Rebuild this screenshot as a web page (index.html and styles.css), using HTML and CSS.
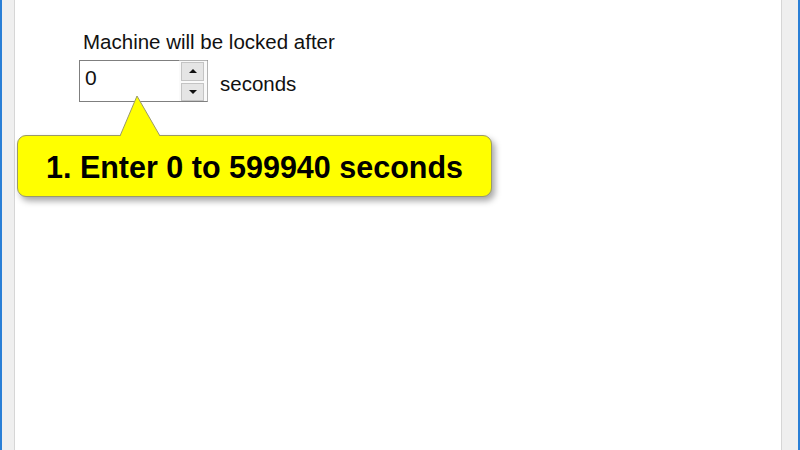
FILE: index.html
```html
<!DOCTYPE html>
<html>
<head>
<meta charset="utf-8">
<link rel="stylesheet" href="styles.css">
</head>
<body>
<div class="window">
  <div class="edge edge-left"></div>
  <div class="panel">
    <div class="label">Machine will be locked after</div>
    <div class="row">
      <div class="spin">
        <div class="field">0</div>
        <div class="buttons">
          <div class="btn"><span class="arrow up"></span></div>
          <div class="btn"><span class="arrow down"></span></div>
        </div>
      </div>
      <span class="unit">seconds</span>
    </div>
    <div class="callout">
      <svg class="pointer" width="46" height="42" viewBox="0 0 46 42">
        <polygon points="3,41 20,1 43,41" fill="#ffff00"/>
        <polyline points="3,41 20,1 43,41" fill="none" stroke="#9a9a6a" stroke-width="1"/>
      </svg>
      <div class="bubble">1. Enter 0 to 599940 seconds</div>
    </div>
  </div>
  <div class="edge edge-right"></div>
</div>
</body>
</html>
```
FILE: styles.css
```css
html, body {
  margin: 0;
  padding: 0;
  width: 800px;
  height: 450px;
  overflow: hidden;
  background: #ffffff;
  font-family: "Liberation Sans", Arial, sans-serif;
}

.window {
  display: flex;
  width: 800px;
  height: 450px;
}

.edge {
  background: #efefef;
  flex: none;
}

.edge-left {
  width: 12px;
  border-left: 2px solid #2a7fd6;
}

.edge-right {
  width: 16px;
  border-right: 2px solid #2a7fd6;
}

.panel {
  position: relative;
  flex: 1;
  background: #ffffff;
  border-left: 1px solid #d6d6d6;
  border-right: 1px solid #d6d6d6;
  padding: 30px 0 0 64px;
}

.label {
  margin-left: 4px;
  font-size: 20.5px;
  line-height: 23px;
  color: #111111;
}

.row {
  display: flex;
  align-items: center;
  margin-top: 7px;
}

.spin {
  display: flex;
  width: 129px;
  height: 42px;
  box-sizing: border-box;
  border: 1px solid #7f7f7f;
  border-right-color: #b4b4b4;
  background: #ffffff;
}

.field {
  width: 94px;
  padding: 5px 0 0 5px;
  font-size: 21px;
  line-height: 24px;
  color: #111111;
}

.buttons {
  flex: 1;
  display: flex;
  flex-direction: column;
  gap: 2px;
  padding: 1px 3px 0 2px;
  border-top: 1px solid #b4b4b4;
  margin-top: -1px;
  background: #fafafa;
}

.btn {
  height: 17px;
  background: #e5e5e5;
  border: 1px solid #c4c4c4;
  display: flex;
  align-items: center;
  justify-content: center;
}

.arrow {
  width: 0;
  height: 0;
  border-left: 4px solid transparent;
  border-right: 4px solid transparent;
}

.arrow.up {
  border-bottom: 4px solid #111111;
}

.arrow.down {
  border-top: 4px solid #111111;
}

.unit {
  margin-left: 12px;
  font-size: 20.5px;
  color: #111111;
  padding-top: 5px;
}

.callout {
  position: absolute;
  left: 2px;
  top: 95px;
  width: 478px;
  height: 103px;
}

.pointer {
  position: absolute;
  left: 100px;
  top: 0;
  z-index: 2;
}

.bubble {
  position: absolute;
  left: 0;
  top: 40px;
  width: 475px;
  height: 62px;
  box-sizing: border-box;
  background: #ffff00;
  border: 1px solid #9a9a6a;
  border-radius: 9px;
  box-shadow: 3px 4px 6px rgba(0, 0, 0, 0.35);
  display: flex;
  align-items: center;
  justify-content: center;
  padding-top: 3px;
  font-size: 30.5px;
  font-weight: bold;
  color: #000000;
}
```
